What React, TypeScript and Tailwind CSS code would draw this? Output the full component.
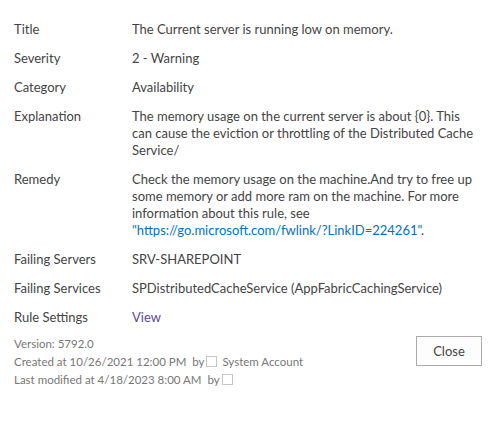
import React from "react";

interface Row {
  label: string;
  value: React.ReactNode;
}

const LINK_URL = "https://go.microsoft.com/fwlink/?LinkID=224261";

const rows: Row[] = [
  { label: "Title", value: "The Current server is running low on memory." },
  { label: "Severity", value: "2 - Warning" },
  { label: "Category", value: "Availability" },
  {
    label: "Explanation",
    value:
      "The memory usage on the current server is about {0}. This can cause the eviction or throttling of the Distributed Cache Service/",
  },
  {
    label: "Remedy",
    value: (
      <>
        Check the memory usage on the machine.And try to free up some memory or
        add more ram on the machine. For more information about this rule, see{" "}
        <a className="text-[#0072c6]" href="#">
          "{LINK_URL}"
        </a>
        .
      </>
    ),
  },
  { label: "Failing Servers", value: "SRV-SHAREPOINT" },
  {
    label: "Failing Services",
    value: "SPDistributedCacheService (AppFabricCachingService)",
  },
  {
    label: "Rule Settings",
    value: (
      <a className="text-[#5c4a8f]" href="#">
        View
      </a>
    ),
  },
];

// small empty user picture box shown next to "by"
const UserBox = () => (
  <span className="inline-block w-[11px] h-[11px] border border-[#c6c6c6] bg-white align-[-1px] mx-[2px]" />
);

const App: React.FC = () => {
  return (
    <div
      className="w-[492px] h-[442px] bg-white text-[#444444] text-[13px] leading-[17px]"
      style={{ fontFamily: '"Segoe UI", Lato, "Open Sans", sans-serif' }}
    >
      <div className="pt-[15px] pl-[14px] pr-[14px]">
        {/* Details */}
        <div className="flex flex-col">
          {rows.map((row) => (
            <div key={row.label} className="flex py-[6px]">
              <div className="w-[118px] shrink-0">{row.label}</div>
              <div className="flex-1">{row.value}</div>
            </div>
          ))}
        </div>

        {/* Footer */}
        <div className="flex justify-between items-start pt-[3px]">
          <div className="text-[11.5px] leading-[18px] text-[#777777]">
            <div>Version: 5792.0</div>
            <div>
              Created at 10/26/2021 12:00 PM&nbsp; by
              <UserBox /> System Account
            </div>
            <div>
              Last modified at 4/18/2023 8:00 AM&nbsp; by
              <UserBox />
            </div>
          </div>
          <button className="mt-[1px] mr-[-4px] w-[66px] h-[30px] border border-[#ababab] bg-[#fdfdfd] text-[#444444] text-[13px]">
            Close
          </button>
        </div>
      </div>
    </div>
  );
};

export default App;
